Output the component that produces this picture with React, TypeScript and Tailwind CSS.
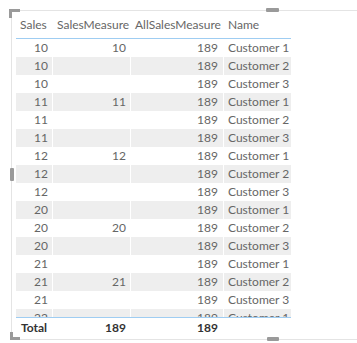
import React from "react";

const rows: [string, string, string, string][] = [
  ["10", "10", "189", "Customer 1"],
  ["10", "", "189", "Customer 2"],
  ["10", "", "189", "Customer 3"],
  ["11", "11", "189", "Customer 1"],
  ["11", "", "189", "Customer 2"],
  ["11", "", "189", "Customer 3"],
  ["12", "12", "189", "Customer 1"],
  ["12", "", "189", "Customer 2"],
  ["12", "", "189", "Customer 3"],
  ["20", "", "189", "Customer 1"],
  ["20", "20", "189", "Customer 2"],
  ["20", "", "189", "Customer 3"],
  ["21", "", "189", "Customer 1"],
  ["21", "21", "189", "Customer 2"],
  ["21", "", "189", "Customer 3"],
  ["22", "", "189", "Customer 1"],
];

export default function App() {
  return (
    <div
      className="relative w-[357px] h-[343px] bg-white overflow-hidden text-[12px] text-[#666666]"
      style={{ fontFamily: 'Lato, "Open Sans", sans-serif' }}
    >
      <div className="ml-[11px] mt-[10px] w-[346px] h-[330px] border-l border-t border-b border-[#e4e4e4] pl-[4px] flex flex-col">
        <div className="w-[275px] flex flex-col">
          {/* header */}
          <div className="grid grid-cols-[36px_78px_93px_68px] h-[27px] items-center border-b border-[#9fcdf2] box-content">
            <div className="pl-[4px] whitespace-nowrap overflow-hidden">Sales</div>
            <div className="pl-[5px] whitespace-nowrap overflow-hidden">SalesMeasure</div>
            <div className="pl-[5px] whitespace-nowrap overflow-hidden">AllSalesMeasure</div>
            <div className="pl-[5px] whitespace-nowrap overflow-hidden">Name</div>
          </div>
          {/* body */}
          <div className="h-[278px] overflow-hidden">
            {rows.map((r, i) => (
              <div
                key={i}
                className={`grid grid-cols-[36px_78px_93px_68px] h-[18px] items-center leading-[18px] ${
                  i % 2 === 1 ? "bg-[#eeeeee]" : "bg-white"
                }`}
              >
                <div className="text-right pr-[4px] h-full">{r[0]}</div>
                <div className="text-right pr-[4px] h-full border-l border-white">{r[1]}</div>
                <div className="text-right pr-[5px] h-full border-l border-white">{r[2]}</div>
                <div className="pl-[4px] h-full border-l border-white whitespace-nowrap overflow-hidden">{r[3]}</div>
              </div>
            ))}
          </div>
          {/* total */}
          <div className="grid grid-cols-[36px_78px_93px_68px] h-[20px] items-center border-t border-[#9fcdf2] box-content font-bold text-[#333333]">
            <div className="pl-[5px]">Total</div>
            <div className="text-right pr-[4px]">189</div>
            <div className="text-right pr-[5px]">189</div>
            <div></div>
          </div>
        </div>
      </div>

      {/* corner marks and handles */}
      <div className="absolute left-[9px] top-[9px] w-[11px] h-[3px] bg-[#9a9a9a]" />
      <div className="absolute left-[9px] top-[9px] w-[3px] h-[9px] bg-[#9a9a9a]" />
      <div className="absolute left-[10px] top-[332px] w-[3px] h-[8px] bg-[#9a9a9a]" />
      <div className="absolute left-[10px] top-[337px] w-[10px] h-[3px] bg-[#9a9a9a]" />
      <div className="absolute left-[266px] top-[8px] w-[13px] h-[4px] rounded-[1px] bg-[#9a9a9a]" />
      <div className="absolute left-[267px] top-[337px] w-[12px] h-[4px] rounded-[1px] bg-[#9a9a9a]" />
      <div className="absolute left-[10px] top-[168px] w-[4px] h-[13px] rounded-[1px] bg-[#9a9a9a]" />
    </div>
  );
}
